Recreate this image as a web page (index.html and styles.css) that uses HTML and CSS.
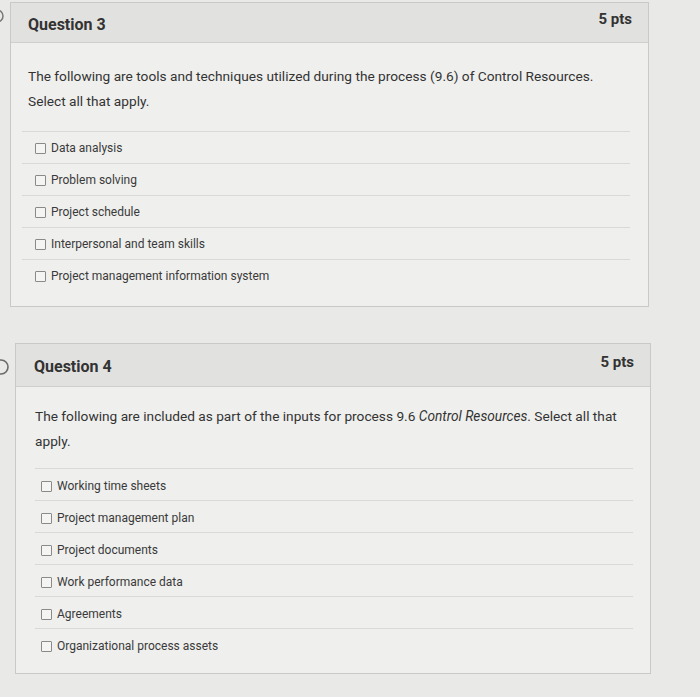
FILE: index.html
```html
<!DOCTYPE html>
<html>
<head>
<meta charset="utf-8">
<link rel="stylesheet" href="styles.css">
</head>
<body>
<div class="page">
  <svg class="nav-mark mark1" width="10" height="16" viewBox="0 0 10 16"><circle cx="-3" cy="8" r="6" fill="none" stroke="#777" stroke-width="1.5"/></svg>
  <svg class="nav-mark mark2" width="12" height="20" viewBox="0 0 12 20"><circle cx="1" cy="10" r="7" fill="none" stroke="#6a6a6a" stroke-width="1.6"/></svg>

  <section class="card q3">
    <header class="card-head">
      <h2 class="title">Question 3</h2>
      <span class="pts">5 pts</span>
    </header>
    <div class="card-body">
      <p class="prompt">The following are tools and techniques utilized during the process (9.6) of Control Resources. Select all that apply.</p>
      <ul class="answers">
        <li><span class="box"></span>Data analysis</li>
        <li><span class="box"></span>Problem solving</li>
        <li><span class="box"></span>Project schedule</li>
        <li><span class="box"></span>Interpersonal and team skills</li>
        <li><span class="box"></span>Project management information system</li>
      </ul>
    </div>
  </section>

  <section class="card q4">
    <header class="card-head">
      <h2 class="title">Question 4</h2>
      <span class="pts">5 pts</span>
    </header>
    <div class="card-body">
      <p class="prompt">The following are included as part of the inputs for process 9.6 <em>Control Resources</em>. Select all that apply.</p>
      <ul class="answers">
        <li><span class="box"></span>Working time sheets</li>
        <li><span class="box"></span>Project management plan</li>
        <li><span class="box"></span>Project documents</li>
        <li><span class="box"></span>Work performance data</li>
        <li><span class="box"></span>Agreements</li>
        <li><span class="box"></span>Organizational process assets</li>
      </ul>
    </div>
  </section>
</div>
</body>
</html>
```

FILE: styles.css
```css
html, body {
  margin: 0;
  padding: 0;
  background: #e9e9e7;
}
body {
  font-family: Roboto, "Liberation Sans", Arial, sans-serif;
  color: #3a3a3a;
  width: 700px;
  height: 697px;
  overflow: hidden;
}
.page {
  position: relative;
  display: flex;
  flex-direction: column;
  padding-top: 2px;
}
.nav-mark {
  position: absolute;
  left: 0;
}
.mark1 { top: 8px; }
.mark2 { top: 357px; }

.card {
  background: #efefed;
  border: 1px solid #c9c9c6;
  box-sizing: border-box;
}
.q3 {
  margin-left: 10px;
  width: 639px;
  height: 305px;
}
.q4 {
  margin-left: 15px;
  margin-top: 36px;
  width: 636px;
  height: 331px;
}
.card-head {
  display: flex;
  justify-content: space-between;
  align-items: center;
  background: #e1e1df;
  border-bottom: 1px solid #cfcfcc;
  box-sizing: border-box;
}
.q3 .card-head { height: 40px; padding: 3px 16px 0 17px; }
.q4 .card-head { height: 43px; padding: 3px 16px 0 18px; }
.title {
  margin: 0;
  font-size: 16px;
  font-weight: 700;
  color: #333;
}
.pts {
  font-size: 15px;
  font-weight: 700;
  color: #333;
  position: relative;
  top: -5px;
}
.prompt {
  margin: 0;
  font-size: 13.7px;
  line-height: 25px;
  color: #333;
}
.q3 .prompt { max-width: 590px; }
.q4 .prompt { max-width: 595px; }
.q3 .card-body { padding: 21px 18px 0 17px; }
.q4 .card-body { padding: 17px 16px 0 19px; }
.prompt em { font-style: italic; }
.answers {
  list-style: none;
  margin: 0;
  padding: 0;
}
.q3 .answers { margin: 17px 0 0 -6px; width: 608px; }
.q4 .answers { margin: 14px 0 0 0; width: 598px; }
.answers li {
  display: flex;
  align-items: center;
  height: 32px;
  border-top: 1px solid #d9d9d6;
  box-sizing: border-box;
  font-size: 12px;
  color: #3a3a3a;
  padding-left: 13px;
  padding-top: 1px;
}
.q4 .answers li { padding-left: 6px; padding-top: 3px; }
.box {
  width: 9px;
  height: 9px;
  border: 1px solid #8a8a88;
  border-radius: 1px;
  background: #f4f4f2;
  margin-right: 5px;
  flex: none;
}
```
